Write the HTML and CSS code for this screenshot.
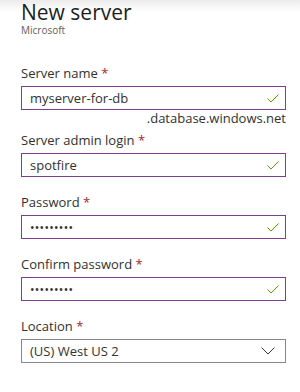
FILE: index.html
```html
<!DOCTYPE html>
<html lang="en">
<head>
    <meta charset="UTF-8">
    <title>New server</title>
    <link rel="stylesheet" href="styles.css">
</head>
<body>
    <div class="header">
        <h1>New server</h1>
        <div class="publisher">Microsoft</div>
    </div>

    <form class="server-form">
        <div class="field has-suffix">
            <label>Server name <span class="req">*</span></label>
            <div class="input valid">
                <span>myserver-for-db</span>
                <svg class="check" width="12" height="9" viewBox="0 0 12 9"><path d="M0.5 4.5 L4 8 L11.5 0.5" fill="none" stroke="#57a300" stroke-width="1"/></svg>
            </div>
            <div class="suffix">.database.windows.net</div>
        </div>
        <div class="field">
            <label>Server admin login <span class="req">*</span></label>
            <div class="input valid">
                <span>spotfire</span>
                <svg class="check" width="12" height="9" viewBox="0 0 12 9"><path d="M0.5 4.5 L4 8 L11.5 0.5" fill="none" stroke="#57a300" stroke-width="1"/></svg>
            </div>
        </div>
        <div class="field">
            <label>Password <span class="req">*</span></label>
            <div class="input valid">
                <span class="dots">•••••••••</span>
                <svg class="check" width="12" height="9" viewBox="0 0 12 9"><path d="M0.5 4.5 L4 8 L11.5 0.5" fill="none" stroke="#57a300" stroke-width="1"/></svg>
            </div>
        </div>
        <div class="field">
            <label>Confirm password <span class="req">*</span></label>
            <div class="input valid">
                <span class="dots">•••••••••</span>
                <svg class="check" width="12" height="9" viewBox="0 0 12 9"><path d="M0.5 4.5 L4 8 L11.5 0.5" fill="none" stroke="#57a300" stroke-width="1"/></svg>
            </div>
        </div>
        <div class="field">
            <label>Location <span class="req">*</span></label>
            <div class="input select">
                <span>(US) West US 2</span>
                <svg class="chevron" width="14" height="8" viewBox="0 0 14 8"><path d="M0.5 0.5 L7 7 L13.5 0.5" fill="none" stroke="#323130" stroke-width="1"/></svg>
            </div>
        </div>
    </form>
</body>
</html>
```

FILE: styles.css
```css
body {
    margin: 0;
    background: #fff;
    font-family: "Open Sans", "Noto Sans", sans-serif;
    color: #323130;
}
.header {
    padding: 1px 14px 0 21px;
    height: 49px;
    background: linear-gradient(#ececec, #fff 12px);
}
.header h1 {
    margin: 0;
    font-size: 21px;
    font-weight: 400;
    line-height: 23px;
    color: #201f1e;
}
.publisher {
    font-size: 10px;
    line-height: 13px;
    color: #605e5c;
}
.server-form {
    padding: 14px 14px 0 21px;
}
.field {
    margin-bottom: 16px;
}
.field.has-suffix {
    margin-bottom: 4px;
}
.field label {
    display: block;
    font-size: 13px;
    line-height: 18px;
    margin-bottom: 4px;
}
.req {
    color: #a4262c;
}
.input {
    display: flex;
    align-items: center;
    justify-content: space-between;
    height: 24px;
    box-sizing: border-box;
    padding: 0 6px 0 8px;
    font-size: 13px;
    border: 1px solid #8a8886;
}
.input.valid {
    border-color: #7b3f8d;
}
.dots {
    font-size: 12px;
    letter-spacing: 0.3px;
}
.suffix {
    text-align: right;
    font-size: 13px;
    line-height: 17px;
}
.chevron {
    margin-right: 4px;
}
```
